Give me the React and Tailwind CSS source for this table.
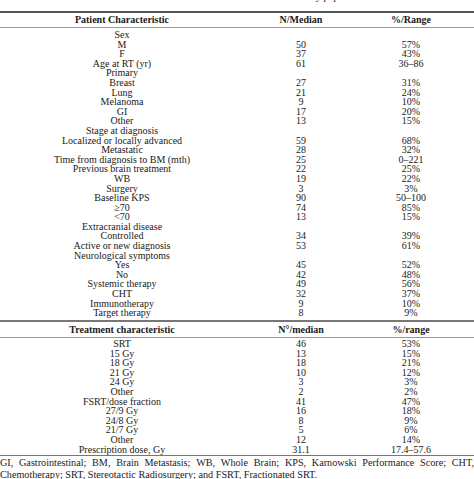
import React from "react";

const patient = [
  ["Sex", "", ""],
  ["M", "50", "57%"],
  ["F", "37", "43%"],
  ["Age at RT (yr)", "61", "36–86"],
  ["Primary", "", ""],
  ["Breast", "27", "31%"],
  ["Lung", "21", "24%"],
  ["Melanoma", "9", "10%"],
  ["GI", "17", "20%"],
  ["Other", "13", "15%"],
  ["Stage at diagnosis", "", ""],
  ["Localized or locally advanced", "59", "68%"],
  ["Metastatic", "28", "32%"],
  ["Time from diagnosis to BM (mth)", "25", "0–221"],
  ["Previous brain treatment", "22", "25%"],
  ["WB", "19", "22%"],
  ["Surgery", "3", "3%"],
  ["Baseline KPS", "90", "50–100"],
  ["≥70", "74", "85%"],
  ["<70", "13", "15%"],
  ["Extracranial disease", "", ""],
  ["Controlled", "34", "39%"],
  ["Active or new diagnosis", "53", "61%"],
  ["Neurological symptoms", "", ""],
  ["Yes", "45", "52%"],
  ["No", "42", "48%"],
  ["Systemic therapy", "49", "56%"],
  ["CHT", "32", "37%"],
  ["Immunotherapy", "9", "10%"],
  ["Target therapy", "8", "9%"],
];

const treatment = [
  ["SRT", "46", "53%"],
  ["15 Gy", "13", "15%"],
  ["18 Gy", "18", "21%"],
  ["21 Gy", "10", "12%"],
  ["24 Gy", "3", "3%"],
  ["Other", "2", "2%"],
  ["FSRT/dose fraction", "41", "47%"],
  ["27/9 Gy", "16", "18%"],
  ["24/8 Gy", "8", "9%"],
  ["21/7 Gy", "5", "6%"],
  ["Other", "12", "14%"],
  ["Prescription dose, Gy", "31.1", "17.4–57.6"],
];

function Row({ r }) {
  return (
    <div className="flex h-[9.6px] leading-[9.6px] whitespace-nowrap">
      <div className="w-[244px] text-center">{r[0]}</div>
      <div className="w-[114px] text-center">{r[1]}</div>
      <div className="w-[106px] text-center">{r[2]}</div>
    </div>
  );
}

function Header({ a, b, c, h }) {
  return (
    <div className={`flex items-center font-bold whitespace-nowrap ${h}`}>
      <div className="w-[244px] text-center">{a}</div>
      <div className="w-[114px] text-center">{b}</div>
      <div className="w-[106px] text-center">{c}</div>
    </div>
  );
}

export default function App() {
  return (
    <div
      className="w-[474px] h-[479px] bg-white text-[#1a1a1a] overflow-hidden"
      style={{ fontFamily: '"Liberation Serif", "DejaVu Serif", serif' }}
    >
      <div className="h-[11px] overflow-hidden relative">
        <div className="absolute left-0 right-0 top-[-9px] text-[10.2px] leading-[12px] text-center whitespace-nowrap pl-[70px]">
          Table 1. Characteristics of the study population.
        </div>
      </div>
      <div className="h-[1.5px] bg-[#555]" />
      <div className="text-[10px]">
        <Header a="Patient Characteristic" b="N/Median" c="%/Range" h="h-[14px]" />
        <div className="h-px bg-[#999]" />
        <div className="pt-[2.5px]">
          {patient.map((r, i) => (
            <Row key={i} r={r} />
          ))}
        </div>
        <div className="h-[2.5px]" />
        <div className="h-[1.2px] bg-[#777]" />
        <Header a="Treatment characteristic" b="N°/median" c="%/range" h="h-[15px]" />
        <div className="h-px bg-[#999]" />
        <div className="pt-[1.5px]">
          {treatment.map((r, i) => (
            <Row key={i} r={r} />
          ))}
        </div>
        <div className="h-[1px]" />
        <div className="h-px bg-[#777]" />
      </div>
      <div className="text-[10.2px] leading-[12px] pt-[1px] whitespace-nowrap">
        <div className="flex justify-between w-[474px]">
          {"GI, Gastrointestinal; BM, Brain Metastasis; WB, Whole Brain; KPS, Karnowski Performance Score; CHT,"
            .split(" ")
            .map((w, i) => (
              <span key={i}>{w}</span>
            ))}
        </div>
        <div>Chemotherapy; SRT, Stereotactic Radiosurgery; and FSRT, Fractionated SRT.</div>
      </div>
    </div>
  );
}
